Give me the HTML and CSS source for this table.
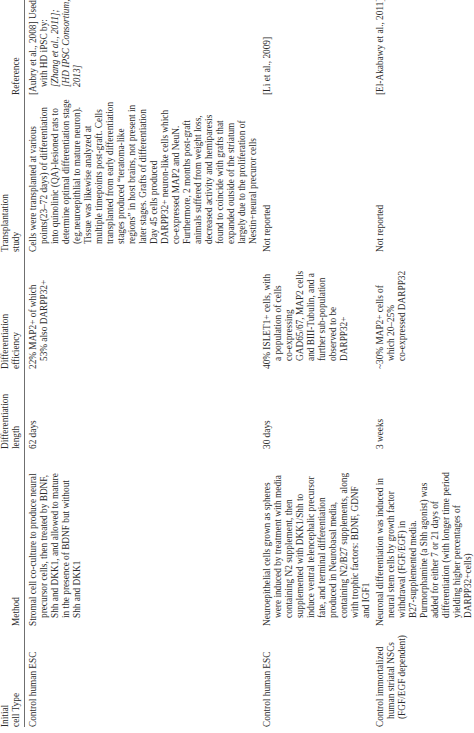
FILE: index.html
```html
<!DOCTYPE html>
<html>
<head>
<meta charset="utf-8">
<link rel="stylesheet" href="styles.css">
</head>
<body>
<div class="page">
  <div class="sheet">
    <div class="grid">
      <div class="th">Initial<br>cell Type</div>
      <div class="th">Method</div>
      <div class="th">Differentiation<br>length</div>
      <div class="th">Differentiation<br>efficiency</div>
      <div class="th">Transplantation<br>study</div>
      <div class="th">Reference</div>

      <div class="td">Control human ESC</div>
      <div class="td">Stromal cell co-culture to produce neural<br>precursor cells, then treated by BDNF,<br>Shh and DKK1, and allowed to mature<br>in the presence of BDNF but without<br>Shh and DKK1</div>
      <div class="td">62 days</div>
      <div class="td">22% MAP2+ of which<br>53% also DARPP32+</div>
      <div class="td">Cells were transplanted at various<br>points(23–72 days) of differentiation<br>into quinolinic (QA)-lesioned rats to<br>determine optimal differentiation stage<br>(eg.neuroepithlial to mature neuron).<br>Tissue was likewise analyzed at<br>multiple timepoints post-graft. Cells<br>transplanted from early differentiation<br>stages produced “teratoma-like<br>regions” in host brains, not present in<br>later stages. Grafts of differentiation<br>Day 45 cells produced<br>DARPP32+ neuron-like cells which<br>co-expressed MAP2 and NeuN.<br>Furthermore, 2 months post-graft<br>animals suffered from weight loss,<br>decreased activity and hemiparesis<br>found to coincide with grafts that<br>expanded outside of the striatum<br>largely due to the proliferation of<br>Nestin+neural precuror cells</div>
      <div class="td">[Aubry et al., 2008] Used<br>with HD iPSC by:<br><i>[Zhang et al., 2011];</i><br><i>[HD IPSC Consortium,</i><br><i>2013]</i></div>

      <div class="td">Control human ESC</div>
      <div class="td">Neuroepithelial cells grown as spheres<br>were induced by treatment with media<br>containing N2 supplement, then<br>supplemented with DKK1/Shh to<br>induce ventral telencephalic precursor<br>fate, and terminal differentiation<br>produced in Neurobasal media,<br>containing N2/B27 supplements, along<br>with trophic factors: BDNF, GDNF<br>and IGF1</div>
      <div class="td">30 days</div>
      <div class="td">40% ISLET1+ cells, with<br>a population of cells<br>co-expressing<br>GAD65/67, MAP2 cells<br>and BIII-Tubulin, and a<br>further sub-population<br>observed to be<br>DARPP32+</div>
      <div class="td">Not reported</div>
      <div class="td">[Li et al., 2009]</div>

      <div class="td">Control immortalized<br>human striatal NSCs<br>(FGF/EGF dependent)</div>
      <div class="td">Neuronal differentiation was induced in<br>neural stem cells by growth factor<br>withdrawal (FGF/EGF) in<br>B27-supplemented media.<br>Purmorphamine (a Shh agonist) was<br>added for either 7 or 21 days of<br>differentiation (with longer time period<br>yielding higher percentages of<br>DARPP32+cells)</div>
      <div class="td">3 weeks</div>
      <div class="td">~30% MAP2+ cells of<br>which 20–25%<br>co-expressed DARPP32</div>
      <div class="td">Not reported</div>
      <div class="td">[El-Akabawy et al., 2011]</div>
    </div>
  </div>
</div>
</body>
</html>
```

FILE: styles.css
```css
html, body {
  margin: 0;
  padding: 0;
  background: #ffffff;
}

.page {
  width: 474px;
  height: 733px;
  overflow: hidden;
  position: relative;
}

.sheet {
  width: 733px;
  height: 474px;
  transform-origin: top left;
  transform: translateY(733px) rotate(-90deg);
  font-family: "Liberation Serif", "Times New Roman", serif;
  font-size: 9.3px;
  line-height: 11px;
  color: #2b2b2b;
}

.grid {
  display: grid;
  grid-template-columns: 101px 177px 80px 117px 157px 101px;
  margin-left: 3px;
  margin-top: -3px;
}

.th {
  align-self: stretch;
  display: flex;
  flex-direction: column;
  justify-content: flex-end;
  padding-bottom: 2px;
  border-bottom: 1px solid #6f6f6f;
  white-space: nowrap;
}

.td {
  padding-top: 3px;
  padding-left: 8px;
  text-indent: -8px;
  white-space: nowrap;
}

.td i {
  font-style: italic;
}
```
